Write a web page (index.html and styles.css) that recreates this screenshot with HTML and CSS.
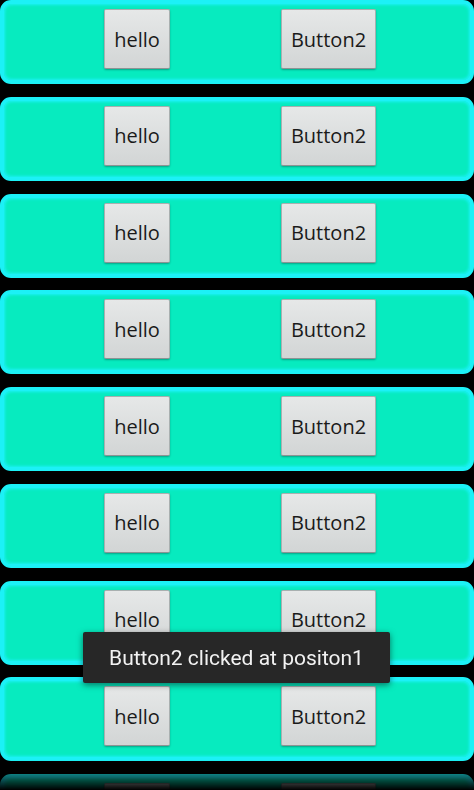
FILE: index.html
```html
<!DOCTYPE html>
<html lang="en">
<head>
  <meta charset="UTF-8" />
  <meta name="viewport" content="width=device-width, initial-scale=1.0"/>
  <title>List</title>
  <link rel="stylesheet" href="styles.css">
</head>
<body>

  <div class="list">
    <div class="row"><button class="btn btn-hello">hello</button><button class="btn btn-two">Button2</button></div>
    <div class="row"><button class="btn btn-hello">hello</button><button class="btn btn-two">Button2</button></div>
    <div class="row"><button class="btn btn-hello">hello</button><button class="btn btn-two">Button2</button></div>
    <div class="row"><button class="btn btn-hello">hello</button><button class="btn btn-two">Button2</button></div>
    <div class="row"><button class="btn btn-hello">hello</button><button class="btn btn-two">Button2</button></div>
    <div class="row"><button class="btn btn-hello">hello</button><button class="btn btn-two">Button2</button></div>
    <div class="row"><button class="btn btn-hello">hello</button><button class="btn btn-two">Button2</button></div>
    <div class="row"><button class="btn btn-hello">hello</button><button class="btn btn-two">Button2</button></div>
    <div class="row"><button class="btn btn-hello">hello</button><button class="btn btn-two">Button2</button></div>
  </div>

  <div class="fade"></div>

  <div class="toast">Button2 clicked at positon1</div>

</body>
</html>
```

FILE: styles.css
```css
* { box-sizing: border-box; margin: 0; padding: 0; }

html, body {
  height: 100%;
  overflow: hidden;
}

body {
  background: #000;
  font-family: Roboto, "Noto Sans", sans-serif;
}

.list {
  display: flex;
  flex-direction: column;
  gap: 12.75px;
}

.row {
  flex: none;
  height: 84px;
  display: flex;
  align-items: flex-start;
  padding: 5px 0 0 100px;
  background: #07ebbf;
  border: 4px solid #1cf1f6;
  border-radius: 11px;
  box-shadow: inset 0 0 3px 1px #1cf1f6;
}

.btn {
  height: 60px;
  font-family: "Open Sans", Roboto, sans-serif;
  font-size: 20px;
  color: #1a1a1a;
  background: linear-gradient(#e6e8e8, #d2d5d5);
  border: 1px solid #a9b0b0;
  border-bottom-color: #8c9494;
  border-radius: 2px;
  box-shadow: 0 1px 2px rgba(0, 0, 0, 0.3);
  padding: 0;
}

.btn-hello {
  width: 66px;
}

.btn-two {
  width: 95px;
  margin-left: 111px;
}

.fade {
  position: fixed;
  left: 0;
  right: 0;
  bottom: 0;
  height: 30px;
  background: linear-gradient(rgba(0, 0, 0, 0), #000);
}

.toast {
  position: fixed;
  left: 83px;
  top: 632px;
  width: 307px;
  height: 51px;
  background: #272727;
  border-radius: 2px;
  box-shadow: 0 2px 6px rgba(0, 0, 0, 0.5);
  color: #f2f2f2;
  font-size: 21px;
  display: flex;
  align-items: center;
  justify-content: center;
}
```
